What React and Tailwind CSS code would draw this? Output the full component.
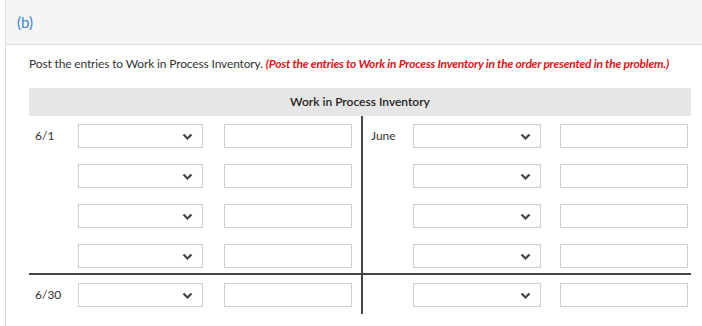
import React from 'react';

const Chevron = () => (
  <svg width="11" height="8" viewBox="0 0 11 8" className="absolute right-[9px] top-[8px]">
    <polyline points="1.5,1.5 5.5,5.5 9.5,1.5" fill="none" stroke="#444" strokeWidth="2.2" />
  </svg>
);

const Select = ({ w }) => (
  <div className={`relative h-[24px] border border-[#d0d0d0] bg-white ${w}`}>
    <Chevron />
  </div>
);

const Input = () => <div className="h-[24px] w-[128px] border border-[#d0d0d0] bg-white" />;

const Row = ({ label, side }) =>
  side === 'left' ? (
    <div className="flex items-center h-[24px]">
      <div className="w-[49px] pl-[6px] text-[12px] text-[#333]">{label}</div>
      <Select w="w-[125px]" />
      <div className="w-[21px]" />
      <Input />
    </div>
  ) : (
    <div className="flex items-center h-[24px]">
      <div className="w-[50px] pl-[8px] text-[12px] text-[#333]">{label}</div>
      <Select w="w-[128px]" />
      <div className="w-[19px]" />
      <Input />
    </div>
  );

export default function App() {
  return (
    <div className="w-[702px] h-[326px] bg-white overflow-hidden" style={{ fontFamily: 'Lato, "Liberation Sans", sans-serif' }}>
      <div className="ml-[5px] border-l border-[#dcdcdc] h-full">
        <div className="h-[45px] bg-[#f5f5f5] border-b border-[#dcdcdc] pl-[11px] pt-[10px]">
          <span className="text-[15px] text-[#3d86d0]">(b)</span>
        </div>
        <div className="pl-[23px]">
          <p className="mt-[11px] text-[12px] leading-[16px] text-[#333] tracking-[-0.15px]">
            Post the entries to Work in Process Inventory.{' '}
            <span className="text-[#e3141a] font-bold italic tracking-[-0.24px]">(Post the entries to Work in Process Inventory in the order presented in the problem.)</span>
          </p>
          <div className="mt-[16px] w-[662px] h-[28px] bg-[#e6e6e6] flex items-center justify-center text-[12px] font-semibold text-[#222]">
            Work in Process Inventory
          </div>
          <div className="flex w-[662px]">
            <div className="w-[334px] border-r-2 border-[#444]">
              <div className="flex flex-col gap-[16px] pt-[8px] pb-[5px]">
                <Row side="left" label="6/1" />
                <Row side="left" />
                <Row side="left" />
                <Row side="left" />
              </div>
              <div className="border-t-2 border-[#444] pt-[8px] pb-[7px]">
                <Row side="left" label="6/30" />
              </div>
            </div>
            <div className="flex-1">
              <div className="flex flex-col gap-[16px] pt-[8px] pb-[5px]">
                <Row side="right" label="June" />
                <Row side="right" />
                <Row side="right" />
                <Row side="right" />
              </div>
              <div className="border-t-2 border-[#444] pt-[8px] pb-[7px]">
                <Row side="right" />
              </div>
            </div>
          </div>
        </div>
      </div>
    </div>
  );
}
